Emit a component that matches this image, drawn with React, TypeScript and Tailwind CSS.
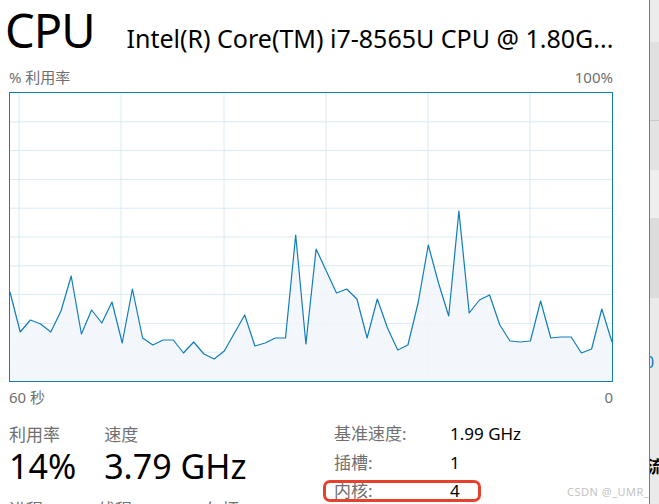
/**
 * タスクマネージャー風 CPU パネル
 */

const FONT = '"Noto Sans", "Noto Sans CJK SC", sans-serif'

// 60秒分の利用率サンプル（画面上の y 座標、上端 93 基準）
const SAMPLES = [
  292, 332, 320, 324, 332, 311, 276, 334, 310, 323, 302, 343, 289, 338, 345, 340, 340, 353, 342, 354,
  359, 351, 333, 315, 346, 343, 338, 338, 235, 344, 249, 271, 293, 289, 299, 338, 299, 328, 350, 345,
  303, 245, 283, 316, 211, 313, 300, 295, 325, 341, 342, 341, 301, 338, 337, 337, 353, 349, 309, 342,
]

const W = 602
const H = 288

function CpuChart() {
  const step = W / (SAMPLES.length - 1)
  const pts = SAMPLES.map((y, i) => `${(i * step).toFixed(1)},${y - 93}`).join(' ')
  const hLines = Array.from({ length: 9 }, (_, i) => (H / 10) * (i + 1))
  const vLines = [9, 111, 214, 316, 418, 520]

  return (
    <div className="ml-[9px] h-[290px] w-[604px] shrink-0 border border-[#117dbb]">
      <svg width={W} height={H} className="block">
        {hLines.map((y) => (
          <line key={y} x1={0} x2={W} y1={y} y2={y} stroke="#d9eaf4" strokeWidth={1} />
        ))}
        {vLines.map((x) => (
          <line key={x} x1={x} x2={x} y1={0} y2={H} stroke="#d9eaf4" strokeWidth={1} />
        ))}
        <polygon points={`${pts} ${W},${H} 0,${H}`} fill="#f1f6fa" fillOpacity={0.85} />
        <polyline points={pts} fill="none" stroke="#117dbb" strokeWidth={1.2} strokeLinejoin="round" />
      </svg>
    </div>
  )
}

export default function App() {
  return (
    <div
      className="relative flex h-[504px] w-[659px] overflow-hidden bg-white text-black"
      style={{ fontFamily: FONT }}
    >
      {/* メイン */}
      <div className="flex w-[649px] flex-col">
        {/* タイトル */}
        <div className="flex h-[66px] shrink-0 items-baseline pl-[5px] pt-[2px]">
          <span className="text-[47px] leading-[56px] tracking-[-1px]">CPU</span>
          <span className="ml-[32px] text-[25px] leading-none">
            Intel(R) Core(TM) i7-8565U CPU @ 1.80G...
          </span>
        </div>

        {/* 軸ラベル上 */}
        <div className="flex h-[26px] w-[613px] shrink-0 justify-between pl-[9px] text-[15px] leading-[22px] text-[#707070]">
          <span>% 利用率</span>
          <span>100%</span>
        </div>

        <CpuChart />

        {/* 軸ラベル下 */}
        <div className="flex h-[30px] w-[613px] shrink-0 justify-between pl-[9px] text-[15px] leading-[30px] text-[#707070]">
          <span>60 秒</span>
          <span>0</span>
        </div>

        {/* 統計 */}
        <div className="mt-[12px] flex shrink-0">
          <div className="flex w-[323px] flex-col pl-[9px]">
            <div className="flex gap-[28px]">
              <div className="flex flex-col">
                <span className="text-[17px] leading-[22px] text-[#707070]">利用率</span>
                <span className="text-[34px] leading-[40px]">14%</span>
              </div>
              <div className="flex flex-col">
                <span className="text-[17px] leading-[22px] text-[#707070]">速度</span>
                <span className="text-[34px] leading-[40px]">3.79 GHz</span>
              </div>
            </div>
            <div className="mt-[13px] flex text-[17px] leading-[22px] text-[#707070]">
              <span className="w-[89px]">进程</span>
              <span className="w-[107px]">线程</span>
              <span>句柄</span>
            </div>
          </div>

          <div className="-mt-[4px] flex flex-col pl-[11px] text-[17px] leading-[28.5px]">
            {[
              ['基准速度:', '1.99 GHz'],
              ['插槽:', '1'],
              ['内核:', '4'],
            ].map(([k, v]) => (
              <div key={k} className="flex">
                <span className="w-[116px] text-[#707070]">{k}</span>
                <span>{v}</span>
              </div>
            ))}
          </div>
        </div>
      </div>

      {/* 右側の背景ウィンドウ */}
      <div className="relative flex w-[10px] flex-col overflow-hidden border-l border-[#7a7a7a] bg-[#e6e6e6]">
        <div className="h-[42px] shrink-0 bg-[#ececec]" />
        <div className="h-[78px] shrink-0 bg-[#e0e0e0]" />
        <div className="h-[50px] shrink-0 border-t border-[#c8c8c8] bg-[#e3e3e3]" />
        <div className="h-[48px] shrink-0 bg-[#eeeeee]" />
        <div className="h-[80px] shrink-0 bg-[#dcdcdc]" />
        <div className="flex-1 bg-[#eaeaea]" />
        <span className="absolute left-[-5px] top-[350px] text-[16px] text-[#117dbb]">0</span>
        <span className="absolute left-[-3px] top-[454px] text-[17px] font-bold">流</span>
      </div>

      {/* 注釈 */}
      <div className="absolute left-[323px] top-[480px] h-[22px] w-[158px] rounded-[7px] border-[3px] border-[#e5412d]" />
      <span className="absolute left-[567px] top-[484px] text-[11px] tracking-[0.5px] text-[#c4c4c4]">
        CSDN @_UMR_
      </span>
    </div>
  )
}
